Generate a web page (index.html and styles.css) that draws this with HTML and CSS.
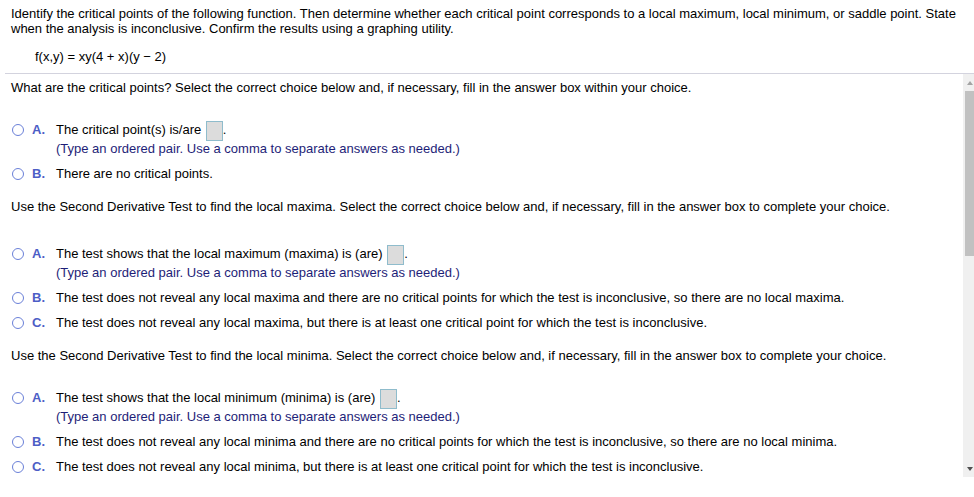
FILE: index.html
```html
<!DOCTYPE html>
<html>
<head>
<meta charset="utf-8">
<link rel="stylesheet" href="styles.css">
</head>
<body>
<div class="page">
  <header class="stem">
    <p class="intro">Identify the critical points of the following function. Then determine whether each critical point corresponds to a local maximum, local minimum, or saddle point. State when the analysis is inconclusive. Confirm the results using a graphing utility.</p>
    <p class="formula">f(x,y) = xy(4 + x)(y − 2)</p>
  </header>
  <div class="pane">
    <main class="content">
      <section class="part">
        <p class="question">What are the critical points? Select the correct choice below and, if necessary, fill in the answer box within your choice.</p>
        <ul class="choices">
          <li class="choice">
            <span class="radio"></span><span class="letter">A.</span>
            <div class="body">
              <div class="line">The critical point(s) is/are <span class="answer-box"></span>.</div>
              <div class="hint">(Type an ordered pair. Use a comma to separate answers as needed.)</div>
            </div>
          </li>
          <li class="choice">
            <span class="radio"></span><span class="letter">B.</span>
            <div class="body"><div class="line">There are no critical points.</div></div>
          </li>
        </ul>
      </section>
      <section class="part part-wide">
        <p class="question">Use the Second Derivative Test to find the local maxima. Select the correct choice below and, if necessary, fill in the answer box to complete your choice.</p>
        <ul class="choices">
          <li class="choice">
            <span class="radio"></span><span class="letter">A.</span>
            <div class="body">
              <div class="line">The test shows that the local maximum (maxima) is (are) <span class="answer-box"></span>.</div>
              <div class="hint">(Type an ordered pair. Use a comma to separate answers as needed.)</div>
            </div>
          </li>
          <li class="choice">
            <span class="radio"></span><span class="letter">B.</span>
            <div class="body"><div class="line">The test does not reveal any local maxima and there are no critical points for which the test is inconclusive, so there are no local maxima.</div></div>
          </li>
          <li class="choice">
            <span class="radio"></span><span class="letter">C.</span>
            <div class="body"><div class="line">The test does not reveal any local maxima, but there is at least one critical point for which the test is inconclusive.</div></div>
          </li>
        </ul>
      </section>
      <section class="part">
        <p class="question">Use the Second Derivative Test to find the local minima. Select the correct choice below and, if necessary, fill in the answer box to complete your choice.</p>
        <ul class="choices">
          <li class="choice">
            <span class="radio"></span><span class="letter">A.</span>
            <div class="body">
              <div class="line">The test shows that the local minimum (minima) is (are) <span class="answer-box"></span>.</div>
              <div class="hint">(Type an ordered pair. Use a comma to separate answers as needed.)</div>
            </div>
          </li>
          <li class="choice">
            <span class="radio"></span><span class="letter">B.</span>
            <div class="body"><div class="line">The test does not reveal any local minima and there are no critical points for which the test is inconclusive, so there are no local minima.</div></div>
          </li>
          <li class="choice">
            <span class="radio"></span><span class="letter">C.</span>
            <div class="body"><div class="line">The test does not reveal any local minima, but there is at least one critical point for which the test is inconclusive.</div></div>
          </li>
        </ul>
      </section>
    </main>
    <div class="scrollbar">
      <div class="track">
        <div class="arrow-up"></div>
        <div class="thumb"></div>
        <div class="track-rest"></div>
        <div class="arrow-down"></div>
      </div>
    </div>
  </div>
</div>
</body>
</html>
```

FILE: styles.css
```css
html, body {
  margin: 0;
  padding: 0;
  background: #ffffff;
}
body {
  font-family: "Liberation Sans", Arial, sans-serif;
  font-size: 13px;
  line-height: 15px;
  color: #000000;
  overflow: hidden;
}
.page {
  width: 974px;
  height: 497px;
  display: flex;
  flex-direction: column;
}
.stem {
  margin-left: 5px;
  padding: 6px 10px 9px 6px;
  border-bottom: 1px solid #d3d3de;
}
.intro {
  margin: 0;
}
.formula {
  margin: 13px 0 0 24px;
}
.pane {
  flex: 1;
  display: flex;
  min-height: 0;
}
.content {
  flex: 1;
  padding: 6px 0 0 11px;
}
.part + .part {
  margin-top: 18px;
}
.question {
  margin: 0;
}
.choices {
  list-style: none;
  margin: 26px 0 0 0;
  padding: 0;
  display: flex;
  flex-direction: column;
  gap: 10px;
}
.part-wide .choices {
  margin-top: 31px;
}
.choice {
  display: flex;
  align-items: flex-start;
}
.radio {
  flex: none;
  width: 10px;
  height: 10px;
  border: 1.4px solid #6a80d8;
  border-radius: 50%;
  margin: 2px 0 0 1px;
}
.choice:first-child .radio {
  margin-top: 3px;
}
.letter {
  flex: none;
  width: 24px;
  margin-left: 8px;
  font-weight: bold;
  color: #4d5ec6;
}
.choice:first-child .letter {
  margin-top: 1px;
}
.body {
  flex: 1;
}
.answer-box {
  display: inline-block;
  width: 15px;
  height: 18px;
  border: 1px solid #8fbccc;
  background: #dcdcdc;
  vertical-align: middle;
  margin-left: 1px;
}
.hint {
  color: #1e1e78;
}
.scrollbar {
  flex: none;
  width: 11px;
  display: flex;
  flex-direction: column;
}
.track {
  height: 403px;
  background: #f0f0f0;
  display: flex;
  flex-direction: column;
  align-items: flex-end;
}
.arrow-up {
  width: 9px;
  height: 17px;
  display: flex;
  align-items: center;
  justify-content: center;
}
.arrow-up::before {
  content: "";
  border-left: 3.5px solid transparent;
  border-right: 3.5px solid transparent;
  border-bottom: 4px solid #a3a3a3;
}
.thumb {
  width: 9px;
  height: 165px;
  background: #c1c1c1;
}
.track-rest {
  flex: 1;
}
.arrow-down {
  width: 9px;
  height: 17px;
  display: flex;
  align-items: center;
  justify-content: center;
}
.arrow-down::before {
  content: "";
  border-left: 3.5px solid transparent;
  border-right: 3.5px solid transparent;
  border-top: 4px solid #505050;
}
```
